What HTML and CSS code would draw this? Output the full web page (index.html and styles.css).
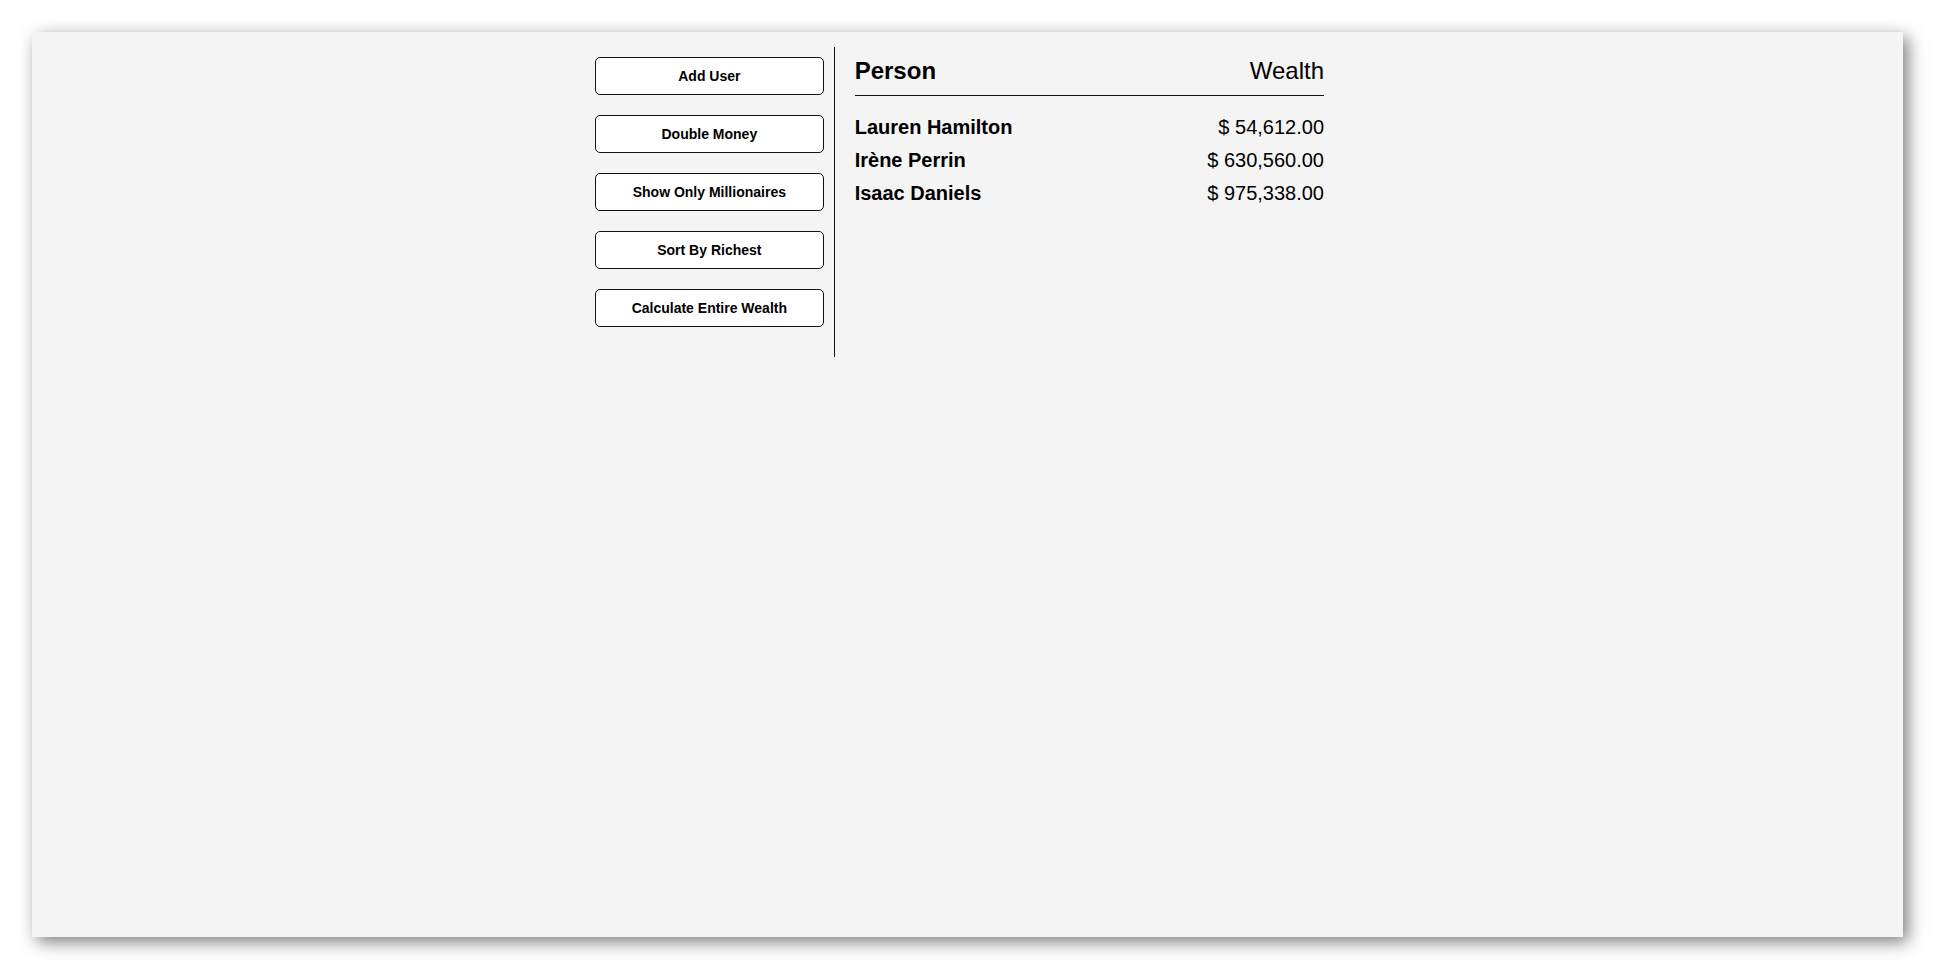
FILE: index.html
```html
<!DOCTYPE html>
<html lang="en">
<head>
<meta charset="UTF-8">
<title>DOM Array Methods</title>
<link rel="stylesheet" href="styles.css">
</head>
<body>
<div class="frame">
  <div class="container">
    <aside class="sidebar">
      <button class="btn">Add User</button>
      <button class="btn">Double Money</button>
      <button class="btn">Show Only Millionaires</button>
      <button class="btn">Sort By Richest</button>
      <button class="btn">Calculate Entire Wealth</button>
    </aside>
    <main class="main">
      <h2 class="head"><strong class="strong">Person</strong> Wealth</h2>
      <div class="person"><strong class="strong">Lauren Hamilton</strong> $ 54,612.00</div>
      <div class="person"><strong class="strong">Irène Perrin</strong> $ 630,560.00</div>
      <div class="person"><strong class="strong">Isaac Daniels</strong> $ 975,338.00</div>
    </main>
  </div>
</div>
</body>
</html>
```
FILE: styles.css
```css
* { box-sizing: border-box; }

html, body {
  margin: 0;
  padding: 0;
  background: #ffffff;
  height: 100%;
}

body {
  padding: 32px;
  font-family: "Liberation Sans", Arial, Helvetica, sans-serif;
  color: #000;
}

.frame {
  height: 905px;
  background: #f4f4f4;
  box-shadow: 5px 5px 16px rgba(0, 0, 0, 0.5);
  display: flex;
  justify-content: center;
  align-items: flex-start;
}

.container {
  display: flex;
  padding: 15px 0;
  width: 765px;
}

.sidebar {
  width: 250px;
  padding: 10px;
  border-right: 1px solid #111;
}

.btn {
  display: block;
  width: 100%;
  background: #fff;
  border: 1px solid #111;
  border-radius: 5px;
  padding: 10px;
  margin: 0 0 20px;
  font-family: "Liberation Sans", Arial, sans-serif;
  font-weight: bold;
  font-size: 14px;
  line-height: 16px;
  color: #000;
  cursor: pointer;
}

.main {
  width: 516px;
  padding: 10px 26px 10px 20px;
}

.head {
  display: flex;
  justify-content: space-between;
  margin: 0 0 20px;
  padding-bottom: 10px;
  border-bottom: 1px solid #111;
  font-size: 24px;
  font-weight: 300;
}

.strong {
  font-weight: 700;
}

.person {
  display: flex;
  justify-content: space-between;
  font-size: 20px;
  margin-bottom: 10px;
}
```
